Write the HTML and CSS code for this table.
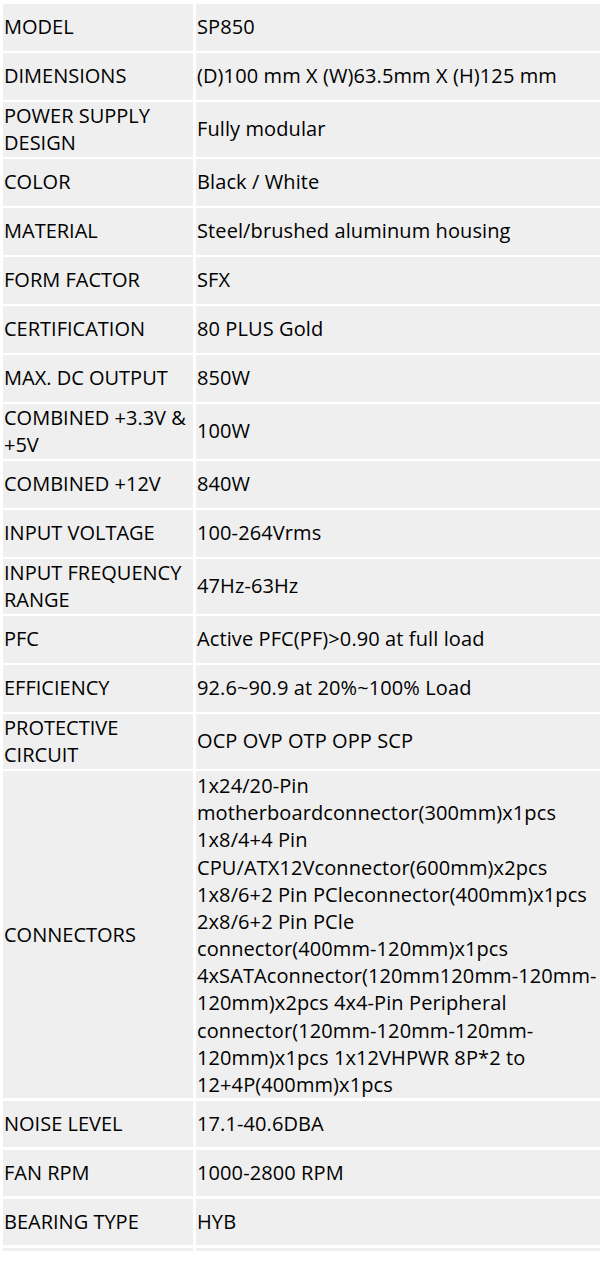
FILE: index.html
```html
<!DOCTYPE html>
<html lang="en">
<head>
<meta charset="utf-8">
<title>SP850 Specifications</title>
<link rel="stylesheet" href="styles.css">
</head>
<body>
<div class="specs">
  <div class="label">MODEL</div><div class="value">SP850</div>
  <div class="label">DIMENSIONS</div><div class="value">(D)100 mm X (W)63.5mm X (H)125 mm</div>
  <div class="label multi">POWER SUPPLY<br>DESIGN</div><div class="value multi">Fully modular</div>
  <div class="label">COLOR</div><div class="value">Black / White</div>
  <div class="label">MATERIAL</div><div class="value">Steel/brushed aluminum housing</div>
  <div class="label">FORM FACTOR</div><div class="value">SFX</div>
  <div class="label">CERTIFICATION</div><div class="value">80 PLUS Gold</div>
  <div class="label">MAX. DC OUTPUT</div><div class="value">850W</div>
  <div class="label multi">COMBINED +3.3V &amp;<br>+5V</div><div class="value multi">100W</div>
  <div class="label">COMBINED +12V</div><div class="value">840W</div>
  <div class="label">INPUT VOLTAGE</div><div class="value">100-264Vrms</div>
  <div class="label multi">INPUT FREQUENCY<br>RANGE</div><div class="value multi">47Hz-63Hz</div>
  <div class="label">PFC</div><div class="value">Active PFC(PF)&gt;0.90 at full load</div>
  <div class="label">EFFICIENCY</div><div class="value">92.6~90.9 at 20%~100% Load</div>
  <div class="label multi">PROTECTIVE<br>CIRCUIT</div><div class="value multi">OCP OVP OTP OPP SCP</div>
  <div class="label long">CONNECTORS</div>
  <div class="value long">1x24/20-Pin<br>motherboardconnector(300mm)x1pcs<br>1x8/4+4 Pin<br>CPU/ATX12Vconnector(600mm)x2pcs<br>1x8/6+2 Pin PCleconnector(400mm)x1pcs<br>2x8/6+2 Pin PCle<br>connector(400mm-120mm)x1pcs<br>4xSATAconnector(120mm120mm-120mm-<br>120mm)x2pcs 4x4-Pin Peripheral<br>connector(120mm-120mm-120mm-<br>120mm)x1pcs 1x12VHPWR 8P*2 to<br>12+4P(400mm)x1pcs</div>
  <div class="label">NOISE LEVEL</div><div class="value">17.1-40.6DBA</div>
  <div class="label">FAN RPM</div><div class="value">1000-2800 RPM</div>
  <div class="label">BEARING TYPE</div><div class="value">HYB</div>
  <div class="label tail"></div><div class="value tail"></div>
</div>
</body>
</html>
```

FILE: styles.css
```css
html, body {
  margin: 0;
  padding: 0;
  background: #ffffff;
}

body {
  font-family: "Open Sans", "Liberation Sans", sans-serif;
  font-size: 20px;
  font-weight: 500;
  color: #000000;
}

.specs {
  display: grid;
  grid-template-columns: 190px 1fr;
  column-gap: 3px;
  row-gap: 2.5px;
  padding: 4px 0 0 3px;
  overflow: hidden;
}

.label,
.value {
  background: #efefef;
  min-height: 46.5px;
  display: flex;
  flex-direction: column;
  justify-content: center;
  line-height: 26.75px;
  white-space: nowrap;
  box-sizing: border-box;
  padding: 1px 0 0 1px;
}

.value {
  letter-spacing: 0.1px;
}

.long {
  line-height: 27.17px;
}

.tail {
  min-height: 3px;
  height: 3px;
  padding: 0;
}
```
